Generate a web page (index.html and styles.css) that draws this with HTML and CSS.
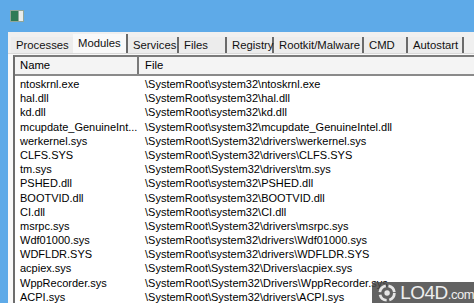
FILE: index.html
```html
<!DOCTYPE html>
<html lang="en">
<head>
    <meta charset="UTF-8">
    <title>Modules</title>
    <link rel="stylesheet" href="styles.css">
</head>
<body>
    <div class="titlebar">
        <svg class="app-icon" width="16" height="12" viewBox="0 0 16 12">
            <rect x="0" y="0" width="14" height="12" fill="#8fa59a"/>
            <rect x="1" y="1" width="7" height="10" fill="#2f7a55"/>
            <rect x="9" y="1" width="4" height="10" fill="#e8ecea"/>
        </svg>
    </div>

    <div class="window">
        <div class="tabs">
            <div class="tab tab-processes">Processes</div>
            <div class="tab tab-modules active">Modules</div>
            <div class="tab tab-services">Services</div>
            <div class="tab tab-files">Files</div>
            <div class="tab tab-registry">Registry</div>
            <div class="tab tab-rootkit">Rootkit/Malware</div>
            <div class="tab tab-cmd">CMD</div>
            <div class="tab tab-autostart">Autostart</div>
        </div>

        <div class="panel">
            <div class="list">
                <div class="header">
                    <div class="col-name">Name</div>
                    <div class="col-file">File</div>
                </div>
                <div class="rows">
                    <div class="row"><span class="col-name">ntoskrnl.exe</span><span class="col-file">\SystemRoot\system32\ntoskrnl.exe</span></div>
                    <div class="row"><span class="col-name">hal.dll</span><span class="col-file">\SystemRoot\system32\hal.dll</span></div>
                    <div class="row"><span class="col-name">kd.dll</span><span class="col-file">\SystemRoot\system32\kd.dll</span></div>
                    <div class="row"><span class="col-name">mcupdate_GenuineInt...</span><span class="col-file">\SystemRoot\system32\mcupdate_GenuineIntel.dll</span></div>
                    <div class="row"><span class="col-name">werkernel.sys</span><span class="col-file">\SystemRoot\System32\drivers\werkernel.sys</span></div>
                    <div class="row"><span class="col-name">CLFS.SYS</span><span class="col-file">\SystemRoot\System32\drivers\CLFS.SYS</span></div>
                    <div class="row"><span class="col-name">tm.sys</span><span class="col-file">\SystemRoot\System32\drivers\tm.sys</span></div>
                    <div class="row"><span class="col-name">PSHED.dll</span><span class="col-file">\SystemRoot\system32\PSHED.dll</span></div>
                    <div class="row"><span class="col-name">BOOTVID.dll</span><span class="col-file">\SystemRoot\system32\BOOTVID.dll</span></div>
                    <div class="row"><span class="col-name">CI.dll</span><span class="col-file">\SystemRoot\system32\CI.dll</span></div>
                    <div class="row"><span class="col-name">msrpc.sys</span><span class="col-file">\SystemRoot\System32\drivers\msrpc.sys</span></div>
                    <div class="row"><span class="col-name">Wdf01000.sys</span><span class="col-file">\SystemRoot\system32\drivers\Wdf01000.sys</span></div>
                    <div class="row"><span class="col-name">WDFLDR.SYS</span><span class="col-file">\SystemRoot\system32\drivers\WDFLDR.SYS</span></div>
                    <div class="row"><span class="col-name">acpiex.sys</span><span class="col-file">\SystemRoot\System32\Drivers\acpiex.sys</span></div>
                    <div class="row"><span class="col-name">WppRecorder.sys</span><span class="col-file">\SystemRoot\System32\Drivers\WppRecorder.sys</span></div>
                    <div class="row"><span class="col-name">ACPI.sys</span><span class="col-file">\SystemRoot\System32\drivers\ACPI.sys</span></div>
                </div>
            </div>
        </div>
    </div>

    <div class="watermark">
        <svg width="20" height="20" viewBox="0 0 20 20">
            <circle cx="10" cy="10" r="8" fill="none" stroke="#e6e6e6" stroke-width="3" stroke-dasharray="10 3"/>
            <circle cx="10" cy="10" r="3" fill="#e6e6e6"/>
        </svg>
        <span class="wm-text">LO4D<small>.com</small></span>
    </div>
</body>
</html>
```

FILE: styles.css
```css
body {
    margin: 0;
    width: 474px;
    height: 303px;
    overflow: hidden;
    position: relative;
    font-family: "Liberation Sans", Arial, sans-serif;
    font-size: 11px;
    color: #000;
    background-color: #5eaae8;
}
.titlebar {
    height: 32px;
    background-color: #5eaae8;
    display: flex;
    align-items: center;
    padding-left: 10px;
}
.window {
    margin-left: 8px;
    height: 271px;
    background-color: #f0f0f0;
    padding-top: 4px;
    box-sizing: border-box;
}
.tabs {
    display: flex;
    padding-left: 3px;
    height: 17px;
    align-items: flex-end;
    font-size: 11.3px;
}
.tab {
    height: 16px;
    line-height: 16px;
    padding-left: 5px;
    box-sizing: border-box;
    background-color: #ececec;
    border-right: 2px solid #6a6a6a;
    white-space: nowrap;
    color: #111;
}
.tab.active {
    height: 19px;
    line-height: 18px;
    margin-top: -3px;
    background-color: #f9f9f9;
}
.tab-processes { width: 62px; border-right: none; }
.tab-modules { width: 55px; }
.tab-services { width: 51px; }
.tab-files { width: 48px; }
.tab-registry { width: 47px; }
.tab-rootkit { width: 90px; }
.tab-cmd { width: 44px; }
.tab-autostart { width: 56px; }
.panel {
    background-color: #f9f9f9;
    border-top: 1px solid #d9d9d9;
    padding: 1px 0 0 5px;
    height: 260px;
}
.list {
    background-color: #ffffff;
    border-left: 2px solid #6d6d6d;
    border-top: 2px solid #7a7a7a;
    height: 100%;
}
.header {
    display: flex;
    height: 17px;
    line-height: 17px;
    font-size: 11.3px;
    background-color: #f4f4f4;
    border-bottom: 2px solid #8a8a8a;
}
.header .col-name {
    border-right: 2px solid #7a7a7a;
}
.col-name {
    width: 117px;
    padding-left: 5px;
    flex-shrink: 0;
}
.col-file {
    padding-left: 6px;
    white-space: nowrap;
}
.rows {
    padding-top: 1px;
}
.row {
    display: flex;
    height: 14.2px;
    line-height: 14px;
    white-space: nowrap;
}
.row .col-name {
    width: 120px;
}
.row .col-file {
    padding-left: 5px;
}
.watermark {
    position: absolute;
    right: 0;
    bottom: 0;
    width: 102px;
    height: 21px;
    background-color: rgba(70, 70, 70, 0.85);
    border-radius: 4px 0 0 0;
    display: flex;
    align-items: center;
    gap: 4px;
    padding-left: 6px;
    box-sizing: border-box;
    color: #eeeeee;
}
.wm-text {
    font-size: 19px;
    letter-spacing: -0.5px;
}
.wm-text small {
    font-size: 13px;
}
```
